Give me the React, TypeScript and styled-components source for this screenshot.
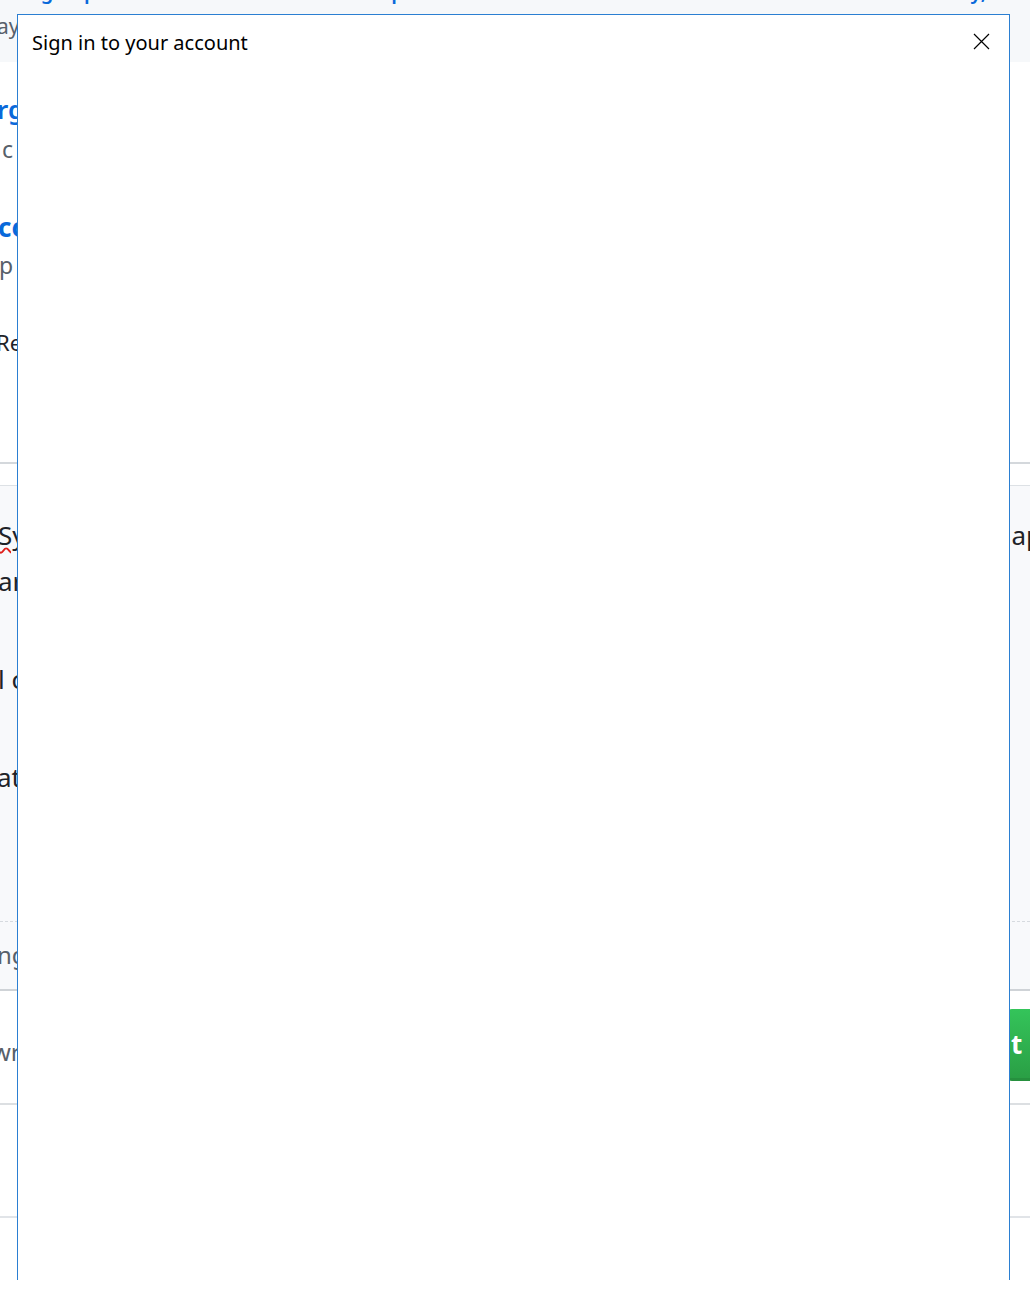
import React from "react";
import styled, { createGlobalStyle } from "styled-components";

const Global = createGlobalStyle`
  html, body { margin: 0; padding: 0; background: #ffffff; overflow: hidden; }
  body { font-family: "Noto Sans", "Open Sans", "Liberation Sans", sans-serif; color: #1f2328; }
`;

const Page = styled.div`
  width: 1030px;
  height: 1305px;
  overflow: hidden;
  display: flex;
  flex-direction: column;
`;

const Header = styled.header`
  height: 62px;
  background: #f6f8fa;
  display: flex;
  flex-direction: column;
  overflow: hidden;
  flex-shrink: 0;
`;

const TopLink = styled.div`
  margin-top: -19px;
  padding-left: 24px;
  height: 22px;
  line-height: 22px;
  font-size: 20px;
  font-weight: 600;
  color: #0969da;
  white-space: nowrap;
`;

const Row = styled.div<{ $h: number }>`
  height: ${(p) => p.$h}px;
  display: flex;
  align-items: center;
  justify-content: space-between;
  flex-shrink: 0;
`;

const Frag = styled.span<{ $size: number; $color: string; $weight?: number; $shift: number; $drop?: number }>`
  font-size: ${(p) => p.$size}px;
  color: ${(p) => p.$color};
  font-weight: ${(p) => p.$weight || 400};
  margin-left: ${(p) => p.$shift}px;
  margin-top: ${(p) => (p.$drop || 0) * 2}px;
  white-space: nowrap;
  line-height: 1.2;
`;

const RightFrag = styled(Frag)`
  margin-left: 0;
  margin-right: -12px;
`;

const Spell = styled.span`
  text-decoration: underline wavy #e0201b;
  text-decoration-thickness: 2px;
  text-underline-offset: 2px;
`;

const Rule = styled.div<{ $color: string; $w: number; $dashed?: boolean }>`
  height: 0;
  border-top: ${(p) => p.$w}px ${(p) => (p.$dashed ? "dashed" : "solid")} ${(p) => p.$color};
  flex-shrink: 0;
`;

const Panel = styled.section`
  background: #f8f9fb;
  border-top: 1px solid #dde1e5;
  display: flex;
  flex-direction: column;
  flex-shrink: 0;
`;

const GreenButton = styled.div`
  width: 120px;
  height: 72px;
  box-sizing: border-box;
  margin-right: -98px;
  background: linear-gradient(#34c45a, #2a9f45);
  border-bottom: 3px solid #26903e;
  border-radius: 4px 0 0 4px;
  color: #ffffff;
  font-size: 26px;
  font-weight: 700;
  display: flex;
  align-items: center;
  padding-left: 3px;
`;

const Modal = styled.div`
  position: fixed;
  left: 17px;
  top: 14px;
  width: 993px;
  height: 1266px;
  box-sizing: border-box;
  background: #ffffff;
  border: 1px solid #2b7fd2;
  border-bottom: none;
  display: flex;
  flex-direction: column;
`;

const ModalHead = styled.div`
  height: 56px;
  display: flex;
  align-items: center;
  justify-content: space-between;
  padding: 0 18px 0 14px;
`;

const Title = styled.h1`
  margin: 0;
  font-size: 20px;
  font-weight: 400;
  color: #000000;
  font-family: "Noto Sans", "Open Sans", sans-serif;
  margin-top: -1px;
`;

const Close = styled.button`
  width: 20px;
  height: 20px;
  padding: 0;
  border: none;
  background: transparent;
  display: flex;
  align-items: center;
  justify-content: center;
  margin-top: -4px;
  cursor: pointer;
`;

export default function App() {
  return (
    <>
      <Global />
      <Page>
        <Header>
          <TopLink>Sign up for a free GitHub account to open an issue and contact its maintainers and the community, too</TopLink>
          <Row $h={48}>
            <Frag $size={21} $color="#57606a" $shift={-3}>ay</Frag>
          </Row>
        </Header>
        <Row $h={28} />
        <Row $h={40}>
          <Frag $size={26} $color="#0969da" $weight={600} $shift={-3}>rg</Frag>
        </Row>
        <Row $h={40}>
          <Frag $size={23} $color="#57606a" $shift={2}>c</Frag>
        </Row>
        <Row $h={38} />
        <Row $h={40}>
          <Frag $size={26} $color="#0969da" $weight={700} $shift={-2}>co</Frag>
        </Row>
        <Row $h={36}>
          <Frag $size={23} $color="#57606a" $shift={-1}>p</Frag>
        </Row>
        <Row $h={38} />
        <Row $h={40}>
          <Frag $size={22} $color="#1f2328" $shift={-4}>Re</Frag>
        </Row>
        <Row $h={100} />
        <Rule $color="#d4d8dc" $w={2} />
        <Row $h={21} />
        <Panel>
          <Row $h={26} />
          <Row $h={48}>
            <Frag $size={26} $color="#1f2328" $shift={-2}><Spell>Sy</Spell></Frag>
            <RightFrag $size={26} $color="#1f2328" $shift={0}>ap</RightFrag>
          </Row>
          <Row $h={44}>
            <Frag $size={26} $color="#1f2328" $shift={-2}>ar</Frag>
          </Row>
          <Row $h={54} />
          <Row $h={44}>
            <Frag $size={26} $color="#1f2328" $shift={-2}>l c</Frag>
          </Row>
          <Row $h={54} />
          <Row $h={44}>
            <Frag $size={26} $color="#1f2328" $shift={-3}>at</Frag>
          </Row>
          <Row $h={121} />
          <Rule $color="#d6dadf" $w={1} $dashed />
          <Row $h={67}>
            <Frag $size={24} $color="#57606a" $shift={-3}>ng</Frag>
          </Row>
          <Rule $color="#cfd3d7" $w={2} />
        </Panel>
        <Row $h={18} />
        <Row $h={72}>
          <Frag $size={24} $color="#57606a" $shift={-8} $drop={7}>wr</Frag>
          <GreenButton>t</GreenButton>
        </Row>
        <Row $h={22} />
        <Rule $color="#dcdfe2" $w={2} />
        <Row $h={111} />
        <Rule $color="#e1e4e8" $w={2} />
      </Page>
      <Modal role="dialog" aria-label="Sign in to your account">
        <ModalHead>
          <Title>Sign in to your account</Title>
          <Close aria-label="Close">
            <svg width="17" height="17" viewBox="0 0 17 17">
              <path d="M1 1 L16 16 M16 1 L1 16" stroke="#000" strokeWidth="1.2" fill="none" />
            </svg>
          </Close>
        </ModalHead>
      </Modal>
    </>
  );
}
